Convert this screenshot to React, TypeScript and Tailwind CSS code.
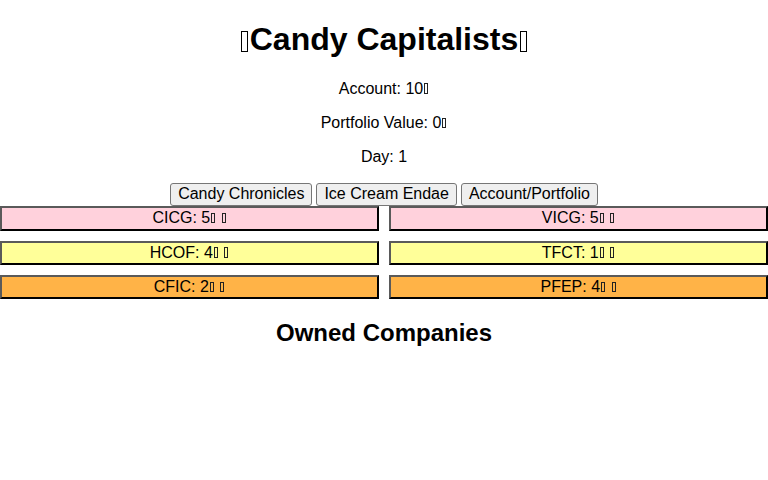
import React from "react";

const Tofu = ({ big }: { big?: boolean }) =>
  big ? (
    <span className="inline-block w-[7px] h-[21px] border-[1.5px] border-black mx-[1.5px] align-[-2px]" />
  ) : (
    <span className="inline-block w-[4px] h-[10.5px] border border-[#222] ml-[1px] mr-[1px] align-[0px]" />
  );

const stocks = [
  { name: "CICG", price: 5, bg: "bg-[#ffd1dc]" },
  { name: "VICG", price: 5, bg: "bg-[#ffd1dc]" },
  { name: "HCOF", price: 4, bg: "bg-[#ffff99]" },
  { name: "TFCT", price: 1, bg: "bg-[#ffff99]" },
  { name: "CFIC", price: 2, bg: "bg-[#ffb347]" },
  { name: "PFEP", price: 4, bg: "bg-[#ffb347]" },
];

export default function App() {
  return (
    <div className="font-['Liberation_Sans',Arial,sans-serif] text-black text-center text-[16px] leading-[1.15] bg-white min-h-[480px]">
      <h1 className="text-[32px] font-bold pt-[21.44px] mb-[21.44px]">
        <Tofu big />
        Candy Capitalists
        <Tofu big />
      </h1>
      <p className="mb-4">
        Account: 10
        <Tofu />
      </p>
      <p className="mb-4">
        Portfolio Value: 0
        <Tofu />
      </p>
      <p className="mb-4">Day: 1</p>
      <div className="flex justify-center gap-[4px]">
        {["Candy Chronicles", "Ice Cream Endae", "Account/Portfolio"].map((t) => (
          <button
            key={t}
            className="px-[7px] py-[1.5px] border border-[#767676] rounded-[3px] bg-[#efefef] text-[16px] leading-[1.15] text-black"
          >
            {t}
          </button>
        ))}
      </div>
      <div className="grid grid-cols-2 gap-x-[10px] gap-y-[10px]">
        {stocks.map((s) => (
          <div
            key={s.name}
            className={`${s.bg} border-2 border-t-[#5a5a5a] border-l-[#5a5a5a] border-b-black border-r-black py-[1px]`}
          >
            {s.name}: {s.price}
            <Tofu /> <Tofu />
          </div>
        ))}
      </div>
      <h2 className="text-[24px] font-bold mt-[19.92px]">Owned Companies</h2>
    </div>
  );
}
